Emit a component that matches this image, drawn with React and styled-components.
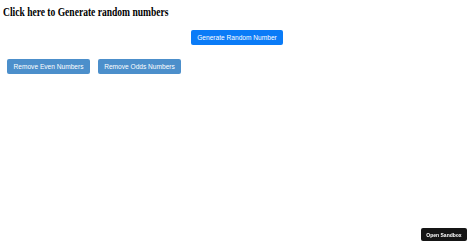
import React from 'react';
import styled, { createGlobalStyle } from 'styled-components';

const Global = createGlobalStyle`
  html, body {
    margin: 0;
    padding: 0;
    background: #fff;
  }
  body {
    font-family: "Liberation Serif", serif;
  }
`;

const Page = styled.div`
  padding: 4px;
  min-height: 240px;
`;

const Title = styled.h1`
  margin: 2px 0 0 -1px;
  font-size: 11.5px;
  line-height: 12px;
  font-weight: bold;
  color: #000;
  white-space: nowrap;
  transform: scaleX(0.83);
  transform-origin: left center;
`;

const Center = styled.div`
  display: flex;
  justify-content: center;
  margin-top: 12px;
`;

const Row = styled.div`
  display: flex;
  gap: 8px;
  padding-left: 3px;
  margin-top: 14px;
`;

const Button = styled.button`
  font-family: "Liberation Sans", Arial, sans-serif;
  font-size: 6.6px;
  color: #fff;
  border: none;
  border-radius: 2px;
  height: 15px;
  padding: 0;
  width: ${({ w }) => w}px;
  background: ${({ color }) => color};
  cursor: pointer;
`;

const Sandbox = styled.div`
  position: fixed;
  right: 7px;
  bottom: 7px;
  width: 46px;
  height: 13px;
  border-radius: 2px;
  background: #151515;
  color: #fff;
  font-family: "Liberation Sans", Arial, sans-serif;
  font-size: 5px;
  font-weight: 600;
  display: flex;
  align-items: center;
  justify-content: center;
  box-shadow: 0 0 2px rgba(255,255,255,0.4);
`;

export default function App() {
  return (
    <Page>
      <Global />
      <Title>Click here to Generate random numbers</Title>
      <Center>
        <Button w={92} color="#0a7bf7">Generate Random Number</Button>
      </Center>
      <Row>
        <Button w={83} color="#4c8fcb">Remove Even Numbers</Button>
        <Button w={83} color="#4c8fcb">Remove Odds Numbers</Button>
      </Row>
      <Sandbox>Open Sandbox</Sandbox>
    </Page>
  );
}
